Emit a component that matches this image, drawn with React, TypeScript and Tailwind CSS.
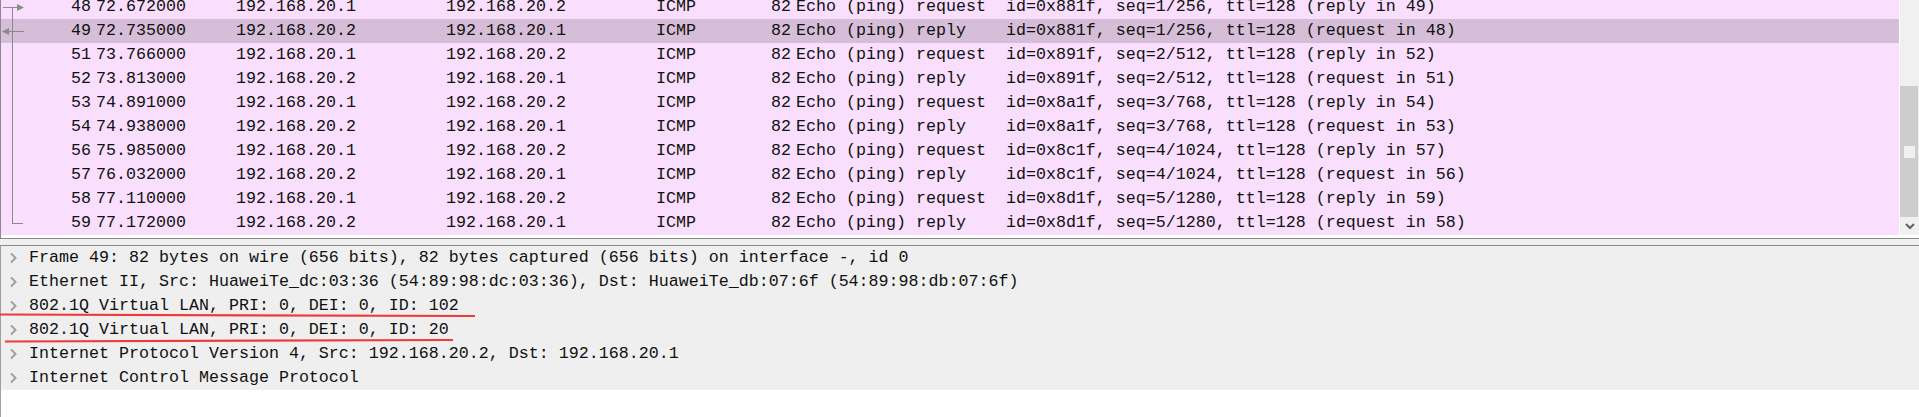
import React from 'react';

type Packet = {
  no: number;
  time: string;
  src: string;
  dst: string;
  kind: 'request' | 'reply';
  id: string;
  seq: string;
  peer: number;
};

const packets: Packet[] = [
  { no: 48, time: '72.672000', src: '192.168.20.1', dst: '192.168.20.2', kind: 'request', id: '0x881f', seq: '1/256', peer: 49 },
  { no: 49, time: '72.735000', src: '192.168.20.2', dst: '192.168.20.1', kind: 'reply', id: '0x881f', seq: '1/256', peer: 48 },
  { no: 51, time: '73.766000', src: '192.168.20.1', dst: '192.168.20.2', kind: 'request', id: '0x891f', seq: '2/512', peer: 52 },
  { no: 52, time: '73.813000', src: '192.168.20.2', dst: '192.168.20.1', kind: 'reply', id: '0x891f', seq: '2/512', peer: 51 },
  { no: 53, time: '74.891000', src: '192.168.20.1', dst: '192.168.20.2', kind: 'request', id: '0x8a1f', seq: '3/768', peer: 54 },
  { no: 54, time: '74.938000', src: '192.168.20.2', dst: '192.168.20.1', kind: 'reply', id: '0x8a1f', seq: '3/768', peer: 53 },
  { no: 56, time: '75.985000', src: '192.168.20.1', dst: '192.168.20.2', kind: 'request', id: '0x8c1f', seq: '4/1024', peer: 57 },
  { no: 57, time: '76.032000', src: '192.168.20.2', dst: '192.168.20.1', kind: 'reply', id: '0x8c1f', seq: '4/1024', peer: 56 },
  { no: 58, time: '77.110000', src: '192.168.20.1', dst: '192.168.20.2', kind: 'request', id: '0x8d1f', seq: '5/1280', peer: 59 },
  { no: 59, time: '77.172000', src: '192.168.20.2', dst: '192.168.20.1', kind: 'reply', id: '0x8d1f', seq: '5/1280', peer: 58 },
];

const details = [
  'Frame 49: 82 bytes on wire (656 bits), 82 bytes captured (656 bits) on interface -, id 0',
  'Ethernet II, Src: HuaweiTe_dc:03:36 (54:89:98:dc:03:36), Dst: HuaweiTe_db:07:6f (54:89:98:db:07:6f)',
  '802.1Q Virtual LAN, PRI: 0, DEI: 0, ID: 102',
  '802.1Q Virtual LAN, PRI: 0, DEI: 0, ID: 20',
  'Internet Protocol Version 4, Src: 192.168.20.2, Dst: 192.168.20.1',
  'Internet Control Message Protocol',
];

// little "related packet" marks in the first column
const TreeMark = ({ index, last }: { index: number; last: number }) => (
  <svg width="24" height="24" className="shrink-0" stroke="#8a8a8a" fill="#8a8a8a">
    {index === 0 && (
      <>
        <line x1="2" y1="12.5" x2="18" y2="12.5" />
        <polygon points="16,9 23,12.5 16,16" stroke="none" />
        <line x1="11.5" y1="12" x2="11.5" y2="24" />
      </>
    )}
    {index === 1 && (
      <>
        <polygon points="1,12.5 8,9 8,16" stroke="none" />
        <line x1="8" y1="12.5" x2="23" y2="12.5" />
        <line x1="11.5" y1="0" x2="11.5" y2="24" />
      </>
    )}
    {index > 1 && index < last && <line x1="11.5" y1="0" x2="11.5" y2="24" />}
    {index === last && (
      <>
        <line x1="11.5" y1="0" x2="11.5" y2="13" />
        <line x1="11" y1="12.5" x2="22" y2="12.5" />
      </>
    )}
  </svg>
);

const PacketRow = ({ p, index }: { p: Packet; index: number }) => {
  const info =
    p.kind === 'request'
      ? `Echo (ping) request  id=${p.id}, seq=${p.seq}, ttl=128 (reply in ${p.peer})`
      : `Echo (ping) reply    id=${p.id}, seq=${p.seq}, ttl=128 (request in ${p.peer})`;
  return (
    <div className={`flex h-[24px] items-center whitespace-pre ${p.no === 49 ? 'bg-[#d6bed8]' : ''}`}>
      <div className="flex w-[90px] items-center">
        <TreeMark index={index} last={packets.length - 1} />
        <span className="flex-1 text-right">{p.no}</span>
      </div>
      <span className="w-[145px] pl-[5px]">{p.time}</span>
      <span className="w-[210px]">{p.src}</span>
      <span className="w-[210px]">{p.dst}</span>
      <span className="w-[105px]">ICMP</span>
      <span className="w-[30px] text-right">82</span>
      <span className="pl-[5px]">{info}</span>
    </div>
  );
};

const Scrollbar = () => (
  <div className="flex w-[20px] shrink-0 flex-col border-l border-white bg-[#f0f0f0]">
    <div className="h-[86px]" />
    <div className="mr-px flex h-[131px] items-center justify-center bg-[#cdcdcd]">
      <div className="h-[12px] w-[11px] bg-[#f0f0f0]" />
    </div>
    <div className="flex flex-1 items-center justify-center">
      <svg width="10" height="7" viewBox="0 0 10 7" fill="none" stroke="#606060" strokeWidth="2">
        <path d="M1 1 L5 5 L9 1" />
      </svg>
    </div>
  </div>
);

export default function App() {
  return (
    <div className="relative h-[417px] w-full overflow-hidden bg-white font-['Liberation_Mono',monospace] text-[16.67px] leading-[24px] text-[#111]">
      {/* packet list */}
      <div className="flex h-[235px] border-l border-[#8a8a8a]">
        <div className="flex-1 overflow-hidden bg-[#f9dffd]">
          <div className="-mt-[5px]">
            {packets.map((p, i) => (
              <PacketRow key={p.no} p={p} index={i} />
            ))}
          </div>
        </div>
        <Scrollbar />
      </div>
      <div className="h-[3px] border-l border-[#8a8a8a]" />
      <div className="h-px bg-[#8a8a8a]" />
      <div className="h-[6px] bg-[#f0f0f0]" />
      <div className="h-px bg-[#8a8a8a]" />

      {/* packet details */}
      <div className="h-[171px] border-l border-[#a0a0a0]">
        <div className="bg-[#efefef]">
          {details.map((d) => (
            <div key={d} className="flex h-[24px] items-center whitespace-pre">
              <div className="flex w-[28px] justify-center pr-[3px]">
                <svg width="9" height="12" viewBox="0 0 9 12" fill="none" stroke="#a0a0a0" strokeWidth="2">
                  <path d="M2 1.5 L6.5 6 L2 10.5" />
                </svg>
              </div>
              <span>{d}</span>
            </div>
          ))}
        </div>
      </div>

      {/* red pen marks */}
      <svg className="pointer-events-none absolute left-0 top-0" width="1919" height="417">
        <path d="M0 314.5 L475 316" stroke="#f03a3a" strokeWidth="2.2" fill="none" />
        <path d="M5 341.5 L453 340" stroke="#f03a3a" strokeWidth="2.2" fill="none" />
      </svg>
    </div>
  );
}
